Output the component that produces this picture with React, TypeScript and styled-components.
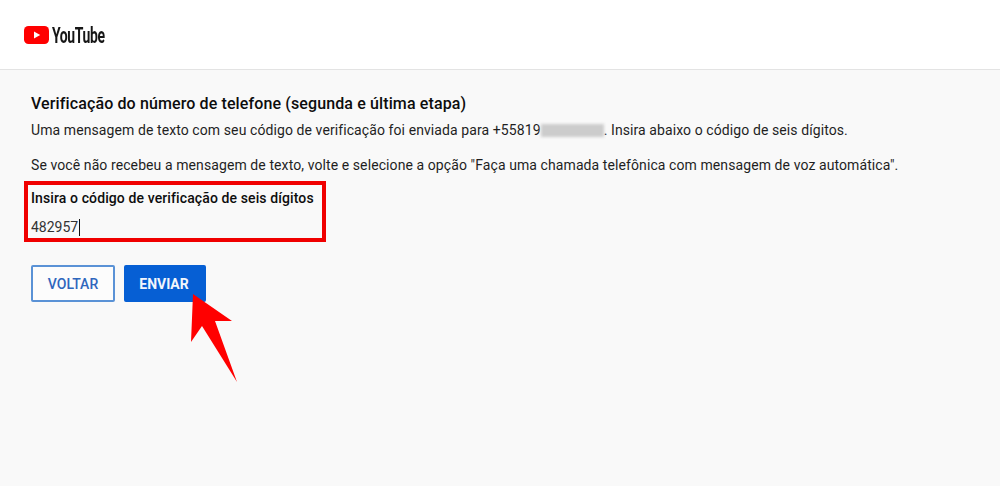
import styled, { createGlobalStyle } from 'styled-components';

const GlobalStyle = createGlobalStyle`
    html, body {
        margin: 0;
        padding: 0;
        height: 100%;
        background-color: #f9f9f9;
        font-family: Roboto, "Liberation Sans", sans-serif;
    }
`;

const App = () => {
    return (
        <Page>
            <GlobalStyle />
            <Header>
                <Logo>
                    <svg width="25" height="18" viewBox="0 0 25 18">
                        <rect width="25" height="18" rx="4.5" fill="#ff0000" />
                        <path d="M10 5.4 L16.2 9 L10 12.6 Z" fill="#fff" />
                    </svg>
                    <LogoText>YouTube</LogoText>
                </Logo>
            </Header>
            <Main>
                <Title>Verificação do número de telefone (segunda e última etapa)</Title>
                <Paragraph>
                    Uma mensagem de texto com seu código de verificação foi enviada para +55819
                    <Blurred />. Insira abaixo o código de seis dígitos.
                </Paragraph>
                <SecondParagraph>
                    Se você não recebeu a mensagem de texto, volte e selecione a opção "Faça uma
                    chamada telefônica com mensagem de voz automática".
                </SecondParagraph>
                <Field>
                    <Label>Insira o código de verificação de seis dígitos</Label>
                    <Code>
                        482957
                        <Caret />
                    </Code>
                    <Highlight />
                </Field>
                <Buttons>
                    <BackButton>VOLTAR</BackButton>
                    <SendButton>ENVIAR</SendButton>
                    <Arrow width="48" height="90" viewBox="0 0 48 90">
                        <path d="M3 1 L42 28 L25 28 L47 89 L12 33 L1 49 Z" fill="#ff0000" />
                    </Arrow>
                </Buttons>
            </Main>
        </Page>
    );
};

const Page = styled.div`
    min-height: 486px;
    background-color: #f9f9f9;
`;

const Header = styled.header`
    height: 70px;
    box-sizing: border-box;
    padding-left: 24px;
    background-color: #fff;
    border-bottom: 1px solid #e3e3e3;
`;

const Logo = styled.div`
    display: flex;
    align-items: center;
    padding-top: 26px;
    height: 18px;
`;

const LogoText = styled.span`
    display: inline-block;
    margin-left: 3px;
    font-size: 22.5px;
    font-weight: 700;
    line-height: 18px;
    color: #161616;
    letter-spacing: -0.6px;
    transform: scaleX(0.62);
    transform-origin: left center;
`;

const Main = styled.main`
    padding: 24px 31px 0;
`;

const Title = styled.h1`
    margin: 0;
    font-size: 16px;
    font-weight: 500;
    line-height: 20px;
    letter-spacing: 0.12px;
    color: #0d0d0d;
`;

const Paragraph = styled.p`
    margin: 6px 0 0;
    font-size: 14px;
    line-height: 20px;
    letter-spacing: 0.09px;
    color: #1f1f1f;
`;

const SecondParagraph = styled(Paragraph)`
    margin-top: 15px;
`;

const Blurred = styled.span`
    display: inline-block;
    width: 63px;
    height: 13px;
    vertical-align: -2px;
    background-color: #cccccc;
    filter: blur(1.5px);
`;

const Field = styled.div`
    position: relative;
    margin-top: 13px;
    width: 287px;
`;

const Label = styled.div`
    font-size: 14px;
    font-weight: 500;
    line-height: 20px;
    letter-spacing: 0.11px;
    color: #0d0d0d;
    white-space: nowrap;
`;

const Code = styled.div`
    margin-top: 9px;
    display: flex;
    align-items: center;
    font-size: 14px;
    line-height: 20px;
    color: #333;
`;

const Caret = styled.span`
    display: inline-block;
    width: 1px;
    height: 17px;
    margin-left: 1px;
    background-color: #111;
`;

const Highlight = styled.div`
    position: absolute;
    left: -7px;
    top: -7px;
    width: 302px;
    height: 61px;
    box-sizing: border-box;
    border: 4px solid #f00000;
`;

const Buttons = styled.div`
    position: relative;
    display: flex;
    gap: 9px;
    margin-top: 28px;
`;

const BackButton = styled.button`
    width: 84px;
    height: 37px;
    padding: 0;
    border: 2px solid #5a92d6;
    border-radius: 2px;
    background-color: #fcfcfc;
    color: #2f66bd;
    font-family: inherit;
    font-size: 14px;
    font-weight: 500;
`;

const SendButton = styled(BackButton)`
    width: 82px;
    padding-right: 2px;
    border-color: #065fd4;
    background-color: #065fd4;
    color: #f2f6fc;
    font-weight: 700;
`;

const Arrow = styled.svg`
    position: absolute;
    left: 159px;
    top: 28px;
`;

export default App;
